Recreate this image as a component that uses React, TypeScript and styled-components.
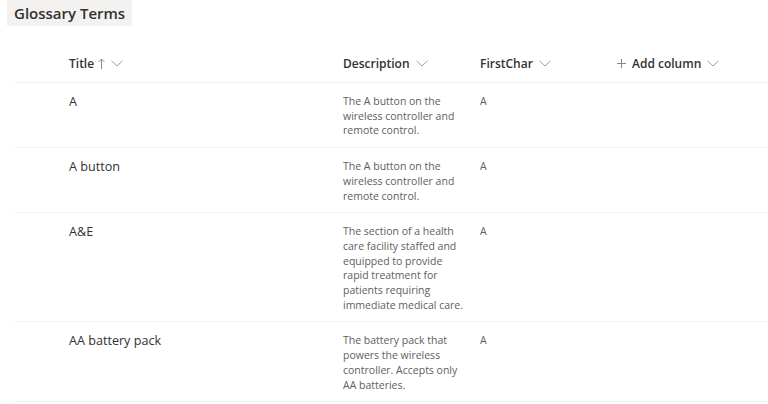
import React from "react";
import styled, { createGlobalStyle } from "styled-components";

const Global = createGlobalStyle`
  html, body { margin: 0; padding: 0; background: #ffffff; }
  body { font-family: "Open Sans", "Noto Sans", sans-serif; color: #323130; -webkit-font-smoothing: antialiased; }
`;

const Page = styled.div`
  width: 768px;
  height: 404px;
  overflow: hidden;
  background: #ffffff;
`;

const TitleBox = styled.div`
  display: inline-flex;
  align-items: center;
  margin-left: 7px;
  height: 26px;
  padding: 0 7px;
  background: #f3f2f1;
  font-size: 15px;
  font-weight: 600;
  color: #323130;
`;

const List = styled.div`
  margin: 15px 0 0 14px;
`;

const Row = styled.div<{ $header?: boolean }>`
  display: grid;
  grid-template-columns: 55px 274px 137px 137px 1fr;
  border-bottom: 1px solid #f3f2f1;
  box-sizing: border-box;
  ${(p) =>
    p.$header
      ? `height: 42px; align-items: center; padding-top: 3px;`
      : `align-items: start; padding: 11px 0 9px;`}
`;

const HeadCell = styled.div`
  display: flex;
  align-items: center;
  font-size: 12px;
  font-weight: 600;
  color: #323130;
  white-space: nowrap;
`;

const TitleCell = styled.div`
  font-size: 12.6px;
  line-height: 15px;
  color: #323130;
`;

const DescCell = styled.div`
  font-size: 10.5px;
  line-height: 14.7px;
  color: #605e5c;
  max-width: 122px;
`;

const CharCell = styled.div`
  font-size: 10.5px;
  line-height: 14.7px;
  color: #605e5c;
`;

const Icon = styled.svg<{ $ml: number; $mr?: number }>`
  display: block;
  flex: none;
  margin-left: ${(p) => p.$ml}px;
  margin-right: ${(p) => p.$mr ?? 0}px;
`;

const Chevron = () => (
  <Icon $ml={6} width="12" height="7" viewBox="0 0 12 7">
    <path d="M0.5 0.8 L6 6 L11.5 0.8" fill="none" stroke="#a19f9d" strokeWidth="1" />
  </Icon>
);

const UpArrow = () => (
  <Icon $ml={4} width="7" height="11" viewBox="0 0 7 11">
    <path d="M3.5 1 V11 M0.5 4 L3.5 1 L6.5 4" fill="none" stroke="#8a8886" strokeWidth="1" />
  </Icon>
);

const PlusIcon = () => (
  <Icon $ml={0} $mr={6} width="9" height="9" viewBox="0 0 9 9">
    <path d="M4.5 0 V9 M0 4.5 H9" fill="none" stroke="#8a8886" strokeWidth="1" />
  </Icon>
);

const rows = [
  { title: "A", desc: "The A button on the wireless controller and remote control." },
  { title: "A button", desc: "The A button on the wireless controller and remote control." },
  {
    title: "A&E",
    desc: "The section of a health care facility staffed and equipped to provide rapid treatment for patients requiring immediate medical care.",
  },
  {
    title: "AA battery pack",
    desc: "The battery pack that powers the wireless controller. Accepts only AA batteries.",
  },
];

export default function App() {
  return (
    <Page>
      <Global />
      <TitleBox>Glossary Terms</TitleBox>
      <List>
        <Row $header>
          <div />
          <HeadCell>
            Title
            <UpArrow />
            <Chevron />
          </HeadCell>
          <HeadCell>
            Description
            <Chevron />
          </HeadCell>
          <HeadCell>
            FirstChar
            <Chevron />
          </HeadCell>
          <HeadCell>
            <PlusIcon />
            Add column
            <Chevron />
          </HeadCell>
        </Row>
        {rows.map((r) => (
          <Row key={r.title}>
            <div />
            <TitleCell>{r.title}</TitleCell>
            <DescCell>{r.desc}</DescCell>
            <CharCell>A</CharCell>
            <div />
          </Row>
        ))}
      </List>
    </Page>
  );
}
